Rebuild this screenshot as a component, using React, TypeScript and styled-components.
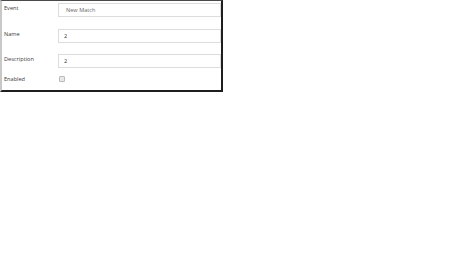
import React from "react";
import styled, { createGlobalStyle } from "styled-components";

const Global = createGlobalStyle`
  html, body { margin: 0; padding: 0; background: #fff; }
  body { font-family: "Open Sans", "Liberation Sans", sans-serif; }
`;

const Panel = styled.div`
  width: 217px;
  border-top: 1px solid #4a4a4a;
  border-left: 2px solid #c8c8c8;
  border-right: 2px solid #1e1e1e;
  border-bottom: 2px solid #1e1e1e;
  padding: 2px 0 7px 2px;
  display: flex;
  flex-direction: column;
  gap: 11.5px;
  box-sizing: content-box;
`;

const Row = styled.div<{ $tight?: boolean }>`
  display: grid;
  grid-template-columns: 54px 1fr;
  align-items: start;
  line-height: 8px;
  font-size: 5.6px;
  margin-top: ${(p) => (p.$tight ? "-6px" : "0")};
`;

const Label = styled.label`
  font-size: 5.6px;
  line-height: 8px;
  color: #3a3a3a;
  padding-top: 1px;
`;

const Field = styled.div<{ $muted?: boolean }>`
  height: 12px;
  border: 1px solid #dcdcdc;
  background: #fff;
  font-size: 5.6px;
  line-height: 12px;
  color: ${(p) => (p.$muted ? "#666" : "#333")};
  padding-left: ${(p) => (p.$muted ? "7px" : "5px")};
`;

const Check = styled.span`
  display: block;
  width: 4px;
  height: 4px;
  margin-top: 2px;
  margin-left: 1px;
  border: 1px solid #bbb;
  background: #e8e8e8;
  border-radius: 1px;
`;

export default function App() {
  return (
    <>
      <Global />
      <Panel>
        <Row>
          <Label>Event</Label>
          <Field $muted>New Match</Field>
        </Row>
        <Row>
          <Label>Name</Label>
          <Field>2</Field>
        </Row>
        <Row>
          <Label>Description</Label>
          <Field>2</Field>
        </Row>
        <Row $tight>
          <Label>Enabled</Label>
          <Check />
        </Row>
      </Panel>
    </>
  );
}
